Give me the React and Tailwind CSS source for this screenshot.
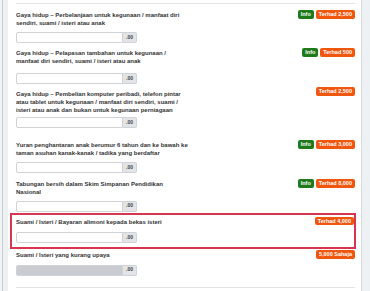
import React from "react";

function Badge({ kind, children }) {
  return (
    <span
      className={`inline-block h-[8.5px] px-[3px] rounded-[2px] text-[5.5px] leading-[8.5px] font-bold text-white whitespace-nowrap ${
        kind === "info" ? "bg-[#1f7a1c]" : "bg-[#f1560f]"
      }`}
    >
      {children}
    </span>
  );
}

function Amount({ disabled, className }) {
  return (
    <div className={`flex w-[121px] h-[11px] ${className}`}>
      <div
        className={`flex-1 border border-[#cfd3d6] rounded-l-[2px] ${
          disabled ? "bg-[#c9cdd1]" : "bg-white"
        }`}
      />
      <div className="w-[14px] flex items-center justify-center bg-[#e2e4e7] border border-l-0 border-[#cfd3d6] rounded-r-[2px] text-[5px] font-bold text-[#444]">
        .00
      </div>
    </div>
  );
}

function Item({ lines, info, limit, labelTop = "mt-[2px]", inputTop, className = "", disabled }) {
  return (
    <div className={className}>
      <div className="flex justify-between items-start">
        <div className={`${labelTop} text-[6px] leading-[7.6px] font-bold text-[#333] whitespace-nowrap`}>
          {lines.map((l, i) => (
            <div key={i}>{l}</div>
          ))}
        </div>
        <div className="flex gap-[2px]">
          {info && <Badge kind="info">Info</Badge>}
          <Badge kind="limit">{limit}</Badge>
        </div>
      </div>
      <Amount className={inputTop} disabled={disabled} />
    </div>
  );
}

export default function App() {
  return (
    <div className="w-[370px] h-[291px] overflow-hidden flex bg-[#eceff1] font-['Liberation_Sans',Arial,sans-serif]">
      <div className="w-[2px] bg-[#f1f3f4]" />
      <div className="w-px bg-[#c5cdd1]" />
      <div className="w-[5px] bg-[#eef1f2]" />
      <div className="flex-1 bg-white border-r border-[#d3d9dc] pl-[8px] pr-[6px]">
        <div className="mt-[3px] border-t border-[#e1e4e6]" />

        <Item
          className="mt-[6px]"
          lines={["Gaya hidup – Perbelanjaan untuk kegunaan / manfaat diri", "sendiri, suami / isteri atau anak"]}
          info
          limit="Terhad 2,500"
          inputTop="mt-[5px]"
        />
        <Item
          className="mt-[5px]"
          lines={["Gaya hidup – Pelapasan tambahan untuk kegunaan /", "manfaat diri sendiri, suami / isteri atau anak"]}
          info
          limit="Terhad 500"
          inputTop="mt-[8px]"
        />
        <Item
          className="mt-[3px]"
          labelTop="mt-[4px]"
          lines={[
            "Gaya hidup – Pembelian komputer peribadi, telefon pintar",
            "atau tablet untuk kegunaan / manfaat diri sendiri, suami /",
            "isteri atau anak dan bukan untuk kegunaan perniagaan",
          ]}
          limit="Terhad 2,500"
          inputTop="mt-[3px]"
        />
        <Item
          className="mt-[12px]"
          lines={["Yuran penghantaran anak berumur 6 tahun dan ke bawah ke", "taman asuhan kanak-kanak / tadika yang berdaftar"]}
          info
          limit="Terhad 3,000"
          inputTop="mt-[5px]"
        />
        <Item
          className="mt-[6px]"
          lines={["Tabungan bersih dalam Skim Simpanan Pendidikan", "Nasional"]}
          info
          limit="Terhad 8,000"
          inputTop="mt-[4px]"
        />
        <div className="mt-[1px] -ml-[6px] -mr-[1px] border-2 border-[#d8354f] pl-[4px] pt-[2px] pb-[4px]">
          <Item
            lines={["Suami / Isteri / Bayaran alimoni kepada bekas isteri"]}
            limit="Terhad 4,000"
            inputTop="mt-[6px]"
          />
        </div>
        <Item
          className="mt-[1px]"
          lines={["Suami / Isteri yang kurang upaya"]}
          limit="5,000 Sahaja"
          inputTop="mt-[5px]"
          disabled
        />
        <div className="mt-[11px] border-t border-[#e1e4e6]" />
      </div>
      <div className="w-[8px] bg-[#eef1f3]" />
    </div>
  );
}
